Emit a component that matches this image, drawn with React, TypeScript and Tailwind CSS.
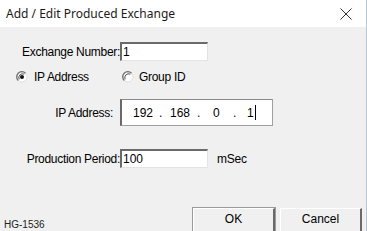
import React from 'react';

const ui = { fontFamily: '"Liberation Sans", Arial, sans-serif' };

// classic sunken edit box
const Edit = ({ value, className }: { value: string; className: string }) => (
  <div
    className={`bg-white border-t-2 border-l-2 border-r border-b border-t-[#6a6a6a] border-l-[#6a6a6a] border-r-[#e3e3e3] border-b-[#e3e3e3] flex items-center pl-[1px] text-[12px] text-black ${className}`}
  >
    {value}
  </div>
);

const Radio = ({ checked }: { checked?: boolean }) => (
  <svg width="12" height="12" viewBox="0 0 12 12" className="shrink-0">
    <circle cx="6" cy="6" r="5" fill="#fff" stroke="#e0e0e0" strokeWidth="1" />
    <path d="M2.2 9.5 A5 5 0 0 1 9.5 2.2" fill="none" stroke="#6e6e6e" strokeWidth="1.3" />
    <path d="M3.2 8.3 A3.8 3.8 0 0 1 8.3 3.2" fill="none" stroke="#3a3a3a" strokeWidth="0.9" />
    {checked && <circle cx="6" cy="6" r="2" fill="#111" />}
  </svg>
);

const Button = ({ label, def }: { label: string; def?: boolean }) => (
  <div
    className={`w-[82px] h-[30px] bg-[#f0f0f0] flex items-center justify-center pb-[7px] text-[12px] text-black border-t border-l border-t-white border-l-white border-r-2 border-b-2 border-r-[#696969] border-b-[#696969] ${def ? 'outline outline-1 outline-[#9a9a9a]' : ''}`}
  >
    {label}
  </div>
);

export default function App() {
  return (
    <div className="w-[367px] h-[231px] overflow-hidden bg-[#f0f0f0] flex flex-col border-r border-r-[#b9c5d3]" style={ui}>
      <div className="h-[27px] bg-white flex items-center justify-between pl-[6px] pr-[14px] shrink-0">
        <span className="text-[12px] text-[#1a1a1a]" style={{ fontFamily: '"Noto Sans", "Open Sans", sans-serif' }}>
          Add / Edit Produced Exchange
        </span>
        <svg width="12" height="12" viewBox="0 0 12 12">
          <path d="M0.5 0.5 L11.5 11.5 M11.5 0.5 L0.5 11.5" stroke="#333" strokeWidth="1" />
        </svg>
      </div>

      <div className="flex-1 flex flex-col text-[12px] text-black">
        <div className="flex items-center mt-[15px] h-[19px]">
          <span className="w-[120px] text-right tracking-[-0.3px]">Exchange Number:</span>
          <Edit value="1" className="w-[88px] h-[19px]" />
        </div>

        <div className="flex items-center mt-[8px] h-[16px]">
          <div className="flex items-center gap-[6px] pl-[16px] w-[122px]">
            <Radio checked />
            <span className="tracking-[-0.3px]">IP Address</span>
          </div>
          <div className="flex items-center gap-[5px]">
            <Radio />
            <span className="tracking-[-0.3px]">Group ID</span>
          </div>
        </div>

        <div className="flex items-center mt-[14px] h-[27px]">
          <span className="w-[113px] text-right tracking-[-0.3px]">IP Address:</span>
          <div className="ml-[7px] w-[153px] h-[27px] bg-white border border-[#a0a0a0] border-l-2 border-l-[#6a6a6a] border-t-[#8a8a8a] flex items-center text-[12px]">
            <span className="ml-[11px] w-[20px]">192</span>
            <span className="ml-[6px] w-[3px]">.</span>
            <span className="ml-[8px] w-[20px]">168</span>
            <span className="ml-[7px] w-[3px]">.</span>
            <span className="ml-[13px] w-[7px]">0</span>
            <span className="ml-[13px] w-[3px]">.</span>
            <span className="ml-[11px]">1</span>
            <span className="w-[1px] h-[15px] bg-black ml-[1px]" />
          </div>
        </div>

        <div className="flex items-center mt-[23px] h-[19px]">
          <span className="w-[120px] text-right tracking-[-0.3px]">Production Period:</span>
          <Edit value="100" className="w-[88px] h-[19px]" />
          <span className="ml-[9px] tracking-[-0.2px]">mSec</span>
        </div>

        <div className="flex items-start mt-[40px]">
          <span className="text-[10px] ml-[4px] mt-[9px] text-[#222]">HG-1536</span>
          <div className="ml-auto flex gap-[5px] mr-[4px]">
            <Button label="OK" def />
            <Button label="Cancel" />
          </div>
        </div>
      </div>
    </div>
  );
}
